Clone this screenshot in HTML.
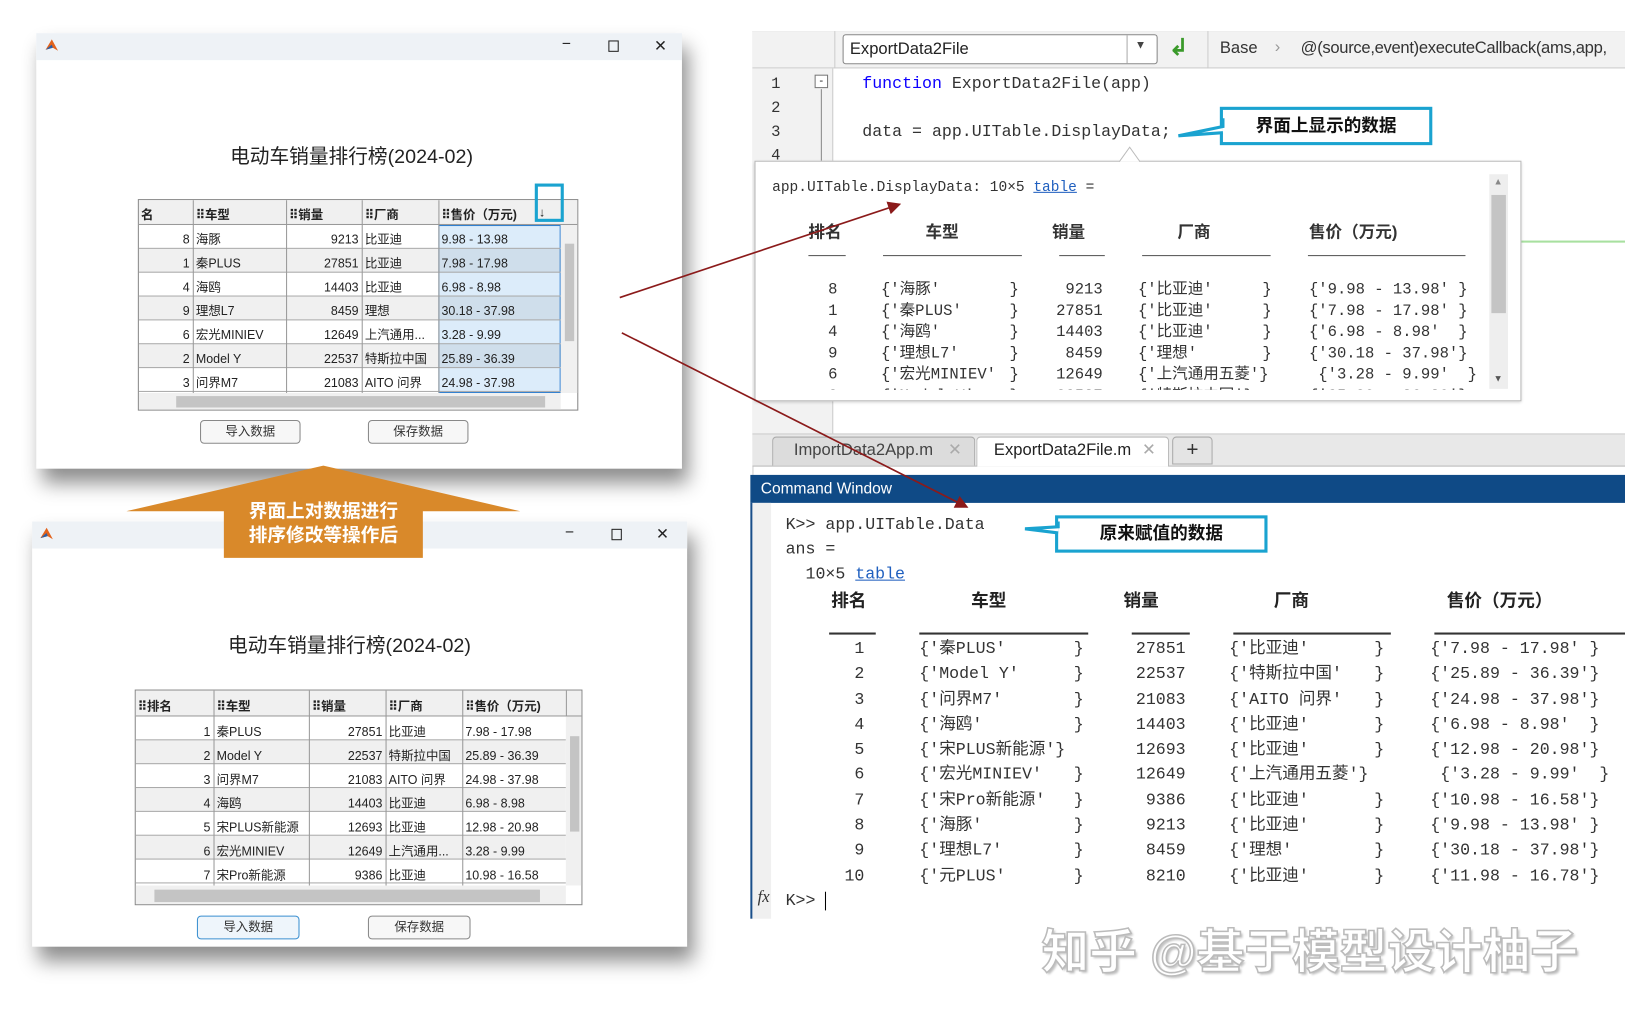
<!DOCTYPE html>
<html><head><meta charset="utf-8">
<style>
*{margin:0;padding:0;box-sizing:border-box}
html,body{width:1625px;height:1012px;overflow:hidden;background:#fff}
#w{position:absolute;left:0;top:0;width:1568px;height:976px;transform:scale(1.0364,1.0369);transform-origin:0 0;font-family:"Liberation Sans","Noto Sans CJK SC",sans-serif;color:#222}
.a{position:absolute}
.win{position:absolute;background:#fff;box-shadow:6px 14px 18px rgba(0,0,0,.45)}
.tb{position:absolute;left:0;top:0;right:0;height:26px;background:#eef2f6}
.ctl{position:absolute;font-size:15px;color:#222}
.t{position:absolute;border:1px solid #888;background:#fff;font-size:12px;overflow:hidden}
.t .c{position:absolute;border-right:1px solid #999;height:100%;top:0}
.t .h{position:absolute;left:0;right:0;top:0;background:#f0f0f0;border-bottom:1px solid #999;font-weight:bold}
.r{position:absolute;left:0;border-bottom:1px solid #aaa;height:23px}
.btn{position:absolute;border:1px solid #888;border-radius:4px;background:#f7f7f7;font-size:12px;text-align:center;line-height:21px;color:#333}
.mono{font-family:"Liberation Mono","Noto Sans CJK SC",monospace}
.call{position:absolute;border:3px solid #1aa3d0;background:#fff;font-weight:bold;font-size:17px;text-align:center;color:#111}
.col{position:absolute;white-space:pre}
</style></head><body><div id="w">

<!-- window 1 -->
<div class="win" style="left:35px;top:32px;width:623px;height:420px">
 <div class="tb"></div>
 <svg class="a" style="left:7px;top:4px" width="16" height="16"><path d="M2 12 L8 2 L14 13 L9 10Z" fill="#e2621b"/><path d="M2 12 L8 7 L9 10Z" fill="#2a5fa8"/></svg>
 <div class="ctl" style="left:507px;top:2px">−</div>
 <div class="a" style="left:552px;top:7px;width:10px;height:11px;border:1.5px solid #222"></div>
 <div class="ctl" style="left:596px;top:3px">✕</div>
 <div class="a" style="left:187px;top:104px;font-size:19px;color:#222;white-space:nowrap">电动车销量排行榜(2024-02)</div>
</div>
<div class="t" style="left:133px;top:192px;width:425px;height:204px">
 <div class="h" style="height:24px"></div>
 <div class="a" style="left:289px;top:24px;width:118px;height:162px;background:#dcecfa;border:1.5px solid #2f7fd0"></div>
 <div class="r" style="top:24px;width:407px;background:transparent"></div>
 <div class="r" style="top:47px;width:407px;background:rgba(0,0,0,.06)"></div>
 <div class="r" style="top:70px;width:407px"></div>
 <div class="r" style="top:93px;width:407px;background:rgba(0,0,0,.06)"></div>
 <div class="r" style="top:116px;width:407px"></div>
 <div class="r" style="top:139px;width:407px;background:rgba(0,0,0,.06)"></div>
 <div class="r" style="top:162px;width:407px"></div>
 <div class="c" style="left:52px;height:186px"></div><div class="c" style="left:142px;height:186px"></div><div class="c" style="left:215px;height:186px"></div><div class="c" style="left:289px;height:186px"></div>
 <div class="col" style="left:2px;top:5px;font-weight:bold">名</div>
 <div class="col" style="left:55px;top:5px;font-weight:bold">⠿车型</div>
 <div class="col" style="left:145px;top:5px;font-weight:bold">⠿销量</div>
 <div class="col" style="left:218px;top:5px;font-weight:bold">⠿厂商</div>
 <div class="col" style="left:292px;top:5px;font-weight:bold">⠿售价（万元)</div>
 <div class="col" style="left:386px;top:5px;font-weight:bold">↓</div>
 <div class="col" style="left:0;width:49px;text-align:right;top:27px;line-height:23px">8
1
4
9
6
2
3</div>
 <div class="col" style="left:55px;top:27px;line-height:23px">海豚
秦PLUS
海鸥
理想L7
宏光MINIEV
Model Y
问界M7</div>
 <div class="col" style="left:142px;width:70px;text-align:right;top:27px;line-height:23px">9213
27851
14403
8459
12649
22537
21083</div>
 <div class="col" style="left:218px;top:27px;line-height:23px">比亚迪
比亚迪
比亚迪
理想
上汽通用...
特斯拉中国
AITO 问界</div>
 <div class="col" style="left:292px;top:27px;line-height:23px">9.98 - 13.98
7.98 - 17.98
6.98 - 8.98
30.18 - 37.98
3.28 - 9.99
25.89 - 36.39
24.98 - 37.98</div>
 <div class="a" style="left:407px;top:24px;width:17px;height:162px;background:#f0f0f0"></div>
 <div class="a" style="left:411px;top:42px;width:9px;height:94px;background:#c4c4c4"></div>
 <div class="a" style="left:0;top:186px;width:407px;height:18px;background:#f0f0f0"></div>
 <div class="a" style="left:36px;top:189px;width:356px;height:11px;background:#c4c4c4"></div>
</div>
<div class="a" style="left:516px;top:177px;width:28px;height:37px;border:3px solid #1aa3d0"></div>
<div class="btn" style="left:193px;top:405px;width:97px;height:23px">导入数据</div>
<div class="btn" style="left:355px;top:405px;width:97px;height:23px">保存数据</div>

<!-- window 2 -->
<div class="win" style="left:31px;top:503px;width:632px;height:410px">
 <div class="tb"></div>
 <svg class="a" style="left:6px;top:4px" width="16" height="16"><path d="M2 12 L8 2 L14 13 L9 10Z" fill="#e2621b"/><path d="M2 12 L8 7 L9 10Z" fill="#2a5fa8"/></svg>
 <div class="ctl" style="left:514px;top:2px">−</div>
 <div class="a" style="left:559px;top:7px;width:10px;height:11px;border:1.5px solid #222"></div>
 <div class="ctl" style="left:602px;top:3px">✕</div>
 <div class="a" style="left:189px;top:105px;font-size:19px;white-space:nowrap">电动车销量排行榜(2024-02)</div>
</div>
<div class="t" style="left:130px;top:665px;width:432px;height:208px">
 <div class="h" style="height:25px"></div>
 <div class="r" style="top:25px;width:415px"></div>
 <div class="r" style="top:48px;width:415px;background:rgba(0,0,0,.06)"></div>
 <div class="r" style="top:71px;width:415px"></div>
 <div class="r" style="top:94px;width:415px;background:rgba(0,0,0,.06)"></div>
 <div class="r" style="top:117px;width:415px"></div>
 <div class="r" style="top:140px;width:415px;background:rgba(0,0,0,.06)"></div>
 <div class="r" style="top:163px;width:415px"></div>
 <div class="c" style="left:75px;height:188px"></div><div class="c" style="left:167px;height:188px"></div><div class="c" style="left:241px;height:188px"></div><div class="c" style="left:315px;height:188px"></div><div class="c" style="left:415px;height:25px"></div>
 <div class="col" style="left:2px;top:6px;font-weight:bold">⠿排名</div>
 <div class="col" style="left:78px;top:6px;font-weight:bold">⠿车型</div>
 <div class="col" style="left:170px;top:6px;font-weight:bold">⠿销量</div>
 <div class="col" style="left:244px;top:6px;font-weight:bold">⠿厂商</div>
 <div class="col" style="left:318px;top:6px;font-weight:bold">⠿售价（万元)</div>
 <div class="col" style="left:0;width:72px;text-align:right;top:29px;line-height:23px">1
2
3
4
5
6
7</div>
 <div class="col" style="left:78px;top:29px;line-height:23px">秦PLUS
Model Y
问界M7
海鸥
宋PLUS新能源
宏光MINIEV
宋Pro新能源</div>
 <div class="col" style="left:167px;width:71px;text-align:right;top:29px;line-height:23px">27851
22537
21083
14403
12693
12649
9386</div>
 <div class="col" style="left:244px;top:29px;line-height:23px">比亚迪
特斯拉中国
AITO 问界
比亚迪
比亚迪
上汽通用...
比亚迪</div>
 <div class="col" style="left:318px;top:29px;line-height:23px">7.98 - 17.98
25.89 - 36.39
24.98 - 37.98
6.98 - 8.98
12.98 - 20.98
3.28 - 9.99
10.98 - 16.58</div>
 <div class="a" style="left:415px;top:25px;width:17px;height:163px;background:#f0f0f0"></div>
 <div class="a" style="left:419px;top:44px;width:9px;height:92px;background:#c4c4c4"></div>
 <div class="a" style="left:0;top:188px;width:415px;height:20px;background:#f0f0f0"></div>
 <div class="a" style="left:18px;top:192px;width:372px;height:12px;background:#c4c4c4"></div>
</div>
<div class="btn" style="left:190px;top:883px;width:99px;height:23px;border-color:#3a8fd0;background:#eef5fb">导入数据</div>
<div class="btn" style="left:355px;top:883px;width:99px;height:23px">保存数据</div>

<!-- orange arrow -->
<svg class="a" style="left:120px;top:447px" width="385" height="92"><path d="M2 46 L192 2 L382 46 L288 46 L288 91 L96 91 L96 46Z" fill="#d9892a"/></svg>
<div class="a" style="left:216px;top:482px;width:192px;text-align:center;color:#fff;font-weight:bold;font-size:18px;line-height:23px">界面上对数据进行<br>排序修改等操作后</div>

<!-- editor -->
<div class="a" style="left:726px;top:30px;width:842px;height:428px;background:#fff;border-left:1px solid #ccc;border-top:1px solid #ccc"></div>
<div class="a" style="left:726px;top:30px;width:842px;height:36px;background:#f2f2f2;border-bottom:1px solid #ccc"></div>
<div class="a" style="left:726px;top:66px;width:78px;height:360px;background:#f2f2f2;border-right:1px solid #ccc"></div>
<div class="a" style="left:805px;top:30px;width:1px;height:36px;background:#ccc"></div>
<div class="a" style="left:813px;top:33px;width:304px;height:29px;border:1px solid #888;background:#fff;border-radius:3px;font-size:16px;line-height:27px;padding-left:6px">ExportData2File</div>
<div class="a" style="left:1087px;top:34px;width:1px;height:27px;background:#aaa"></div>
<div class="a" style="left:1095px;top:38px;font-size:11px;color:#444">▼</div>
<div class="a" style="left:1128px;top:33px;font-size:22px;color:#3a9a2a;font-weight:bold">↲</div>
<div class="a" style="left:1165px;top:30px;width:1px;height:36px;background:#ccc"></div>
<div class="a" style="left:1177px;top:38px;font-size:16px;color:#333">Base</div>
<div class="a" style="left:1230px;top:37px;font-size:16px;color:#999">›</div>
<div class="a" style="left:1255px;top:38px;font-size:16px;color:#333;white-space:nowrap;letter-spacing:-.3px">@(source,event)executeCallback(ams,app,</div>
<div class="col mono" style="left:744px;top:70px;font-size:15px;line-height:23px;color:#333">1
2
3
4</div>
<div class="a" style="left:786px;top:72px;width:13px;height:13px;border:1px solid #777;font-size:11px;line-height:10px;text-align:center;background:#fff">-</div>
<div class="a" style="left:792px;top:86px;width:1px;height:70px;background:#888"></div>
<div class="col mono" style="left:832px;top:70px;font-size:16px;line-height:23px;color:#333"><span style="color:#0e00ff">function</span> ExportData2File(app)

data = app.UITable.DisplayData;</div>
<div class="a" style="left:1460px;top:232px;width:108px;height:2px;background:#a8e0a0"></div>
<!-- datatip -->
<div class="a" style="left:728px;top:155px;width:740px;height:232px;background:#fff;border:1px solid #bbb;box-shadow:0 1px 3px rgba(0,0,0,.2)"></div>
<svg class="a" style="left:1080px;top:141px" width="20" height="16"><path d="M0 15 L10 1 L20 15" fill="#fff" stroke="#bbb"/></svg>
<div class="col mono" style="left:745px;top:173px;font-size:14px;color:#333">app.UITable.DisplayData: 10×5 <span style="color:#1f5fbf;text-decoration:underline">table</span> =</div>
<div class="col" style="left:780px;top:210px;font-size:16px;font-weight:bold;color:#333">排名</div>
<div class="col" style="left:893px;top:210px;font-size:16px;font-weight:bold;color:#333">车型</div>
<div class="col" style="left:1015px;top:210px;font-size:16px;font-weight:bold;color:#333">销量</div>
<div class="col" style="left:1136px;top:210px;font-size:16px;font-weight:bold;color:#333">厂商</div>
<div class="col" style="left:1263px;top:210px;font-size:16px;font-weight:bold;color:#333">售价（万元)</div>
<div class="a" style="left:780px;top:246px;width:36px;height:1px;background:#555"></div>
<div class="a" style="left:852px;top:246px;width:134px;height:1px;background:#555"></div>
<div class="a" style="left:1022px;top:246px;width:44px;height:1px;background:#555"></div>
<div class="a" style="left:1102px;top:246px;width:124px;height:1px;background:#555"></div>
<div class="a" style="left:1262px;top:246px;width:152px;height:1px;background:#555"></div>
<div style="position:absolute;left:728px;top:270px;width:740px;height:106px;overflow:hidden;font-size:15px;line-height:20.5px;color:#333" class="mono">
 <div class="col" style="left:50px;width:30px;text-align:right;top:0">8
1
4
9
6
2</div>
 <div class="col" style="left:122px;top:0">{'海豚'
{'秦PLUS'
{'海鸥'
{'理想L7'
{'宏光MINIEV'
{'Model Y'</div>
 <div class="col" style="left:246px;top:0">}
}
}
}
}
}</div>
 <div class="col" style="left:270px;width:66px;text-align:right;top:0">9213
27851
14403
8459
12649
22537</div>
 <div class="col" style="left:370px;top:0">{'比亚迪'
{'比亚迪'
{'比亚迪'
{'理想'
{'上汽通用五菱'}
{'特斯拉中国'}</div>
 <div class="col" style="left:490px;top:0">}
}
}
}</div>
 <div class="col" style="left:535px;top:0">{'9.98 - 13.98' }
{'7.98 - 17.98' }
{'6.98 - 8.98'  }
{'30.18 - 37.98'}
 {'3.28 - 9.99'  }
{'25.89 - 36.39'}</div>
</div>
<div class="a" style="left:1437px;top:168px;width:18px;height:207px;background:#eee"></div>
<div class="a" style="left:1439px;top:188px;width:14px;height:114px;background:#c4c4c4"></div>
<div class="a" style="left:1441px;top:170px;font-size:9px;color:#888">▲</div>
<div class="a" style="left:1441px;top:360px;font-size:9px;color:#555">▼</div>
<div class="call" style="left:1177px;top:103px;width:205px;height:37px;line-height:31px">界面上显示的数据</div>
<svg class="a" style="left:1133px;top:112px" width="50" height="24"><path d="M47 2 L47 10 L4 19 L47 16" fill="#fff" stroke="#1aa3d0" stroke-width="3"/></svg>

<!-- tabs -->
<div class="a" style="left:726px;top:418px;width:842px;height:32px;background:#e8e8e8;border-top:1px solid #ccc;border-bottom:1px solid #bbb"></div>
<div class="a" style="left:745px;top:421px;width:196px;height:28px;background:#dcdcdc;border:1px solid #aaa;border-bottom:none;border-radius:4px 4px 0 0;font-size:16px;line-height:26px;padding-left:20px;color:#444">ImportData2App.m <span style="color:#aaa;margin-left:10px">✕</span></div>
<div class="a" style="left:942px;top:421px;width:186px;height:29px;background:#fff;border:1px solid #bbb;border-bottom:none;border-radius:4px 4px 0 0;font-size:16px;line-height:26px;padding-left:16px;color:#222">ExportData2File.m <span style="color:#aaa;margin-left:6px">✕</span></div>
<div class="a" style="left:1131px;top:421px;width:39px;height:27px;background:#e4e4e4;border:1px solid #aaa;border-radius:4px 4px 0 0;font-size:20px;text-align:center;line-height:24px;color:#333">+</div>

<!-- command window -->
<div class="a" style="left:724px;top:458px;width:844px;height:27px;background:#0f4a86;color:#fff;font-size:15px;line-height:27px;padding-left:10px">Command Window</div>
<div class="a" style="left:724px;top:485px;width:2px;height:401px;background:#1a4f8a"></div>
<div class="a" style="left:726px;top:485px;width:18px;height:401px;background:#f0f0f0"></div>
<div class="col mono" style="left:758px;top:494px;font-size:16px;line-height:24px;color:#333">K&gt;&gt; app.UITable.Data
ans =
  10×5 <span style="color:#1f5fbf;text-decoration:underline">table</span></div>
<div class="call" style="left:1018px;top:497px;width:205px;height:36px;line-height:30px">原来赋值的数据</div>
<svg class="a" style="left:985px;top:500px" width="40" height="24"><path d="M36 3 L36 8 L4 10 L36 14" fill="#fff" stroke="#1aa3d0" stroke-width="3"/></svg>
<div class="col" style="left:802px;top:565px;font-size:17px;font-weight:bold;color:#222">排名</div>
<div class="col" style="left:937px;top:565px;font-size:17px;font-weight:bold;color:#222">车型</div>
<div class="col" style="left:1084px;top:565px;font-size:17px;font-weight:bold;color:#222">销量</div>
<div class="col" style="left:1229px;top:565px;font-size:17px;font-weight:bold;color:#222">厂商</div>
<div class="col" style="left:1396px;top:565px;font-size:17px;font-weight:bold;color:#222">售价（万元）</div>
<div class="a" style="left:800px;top:610px;width:45px;height:2px;background:#333"></div>
<div class="a" style="left:887px;top:610px;width:163px;height:2px;background:#333"></div>
<div class="a" style="left:1092px;top:610px;width:56px;height:2px;background:#333"></div>
<div class="a" style="left:1190px;top:610px;width:152px;height:2px;background:#333"></div>
<div class="a" style="left:1384px;top:610px;width:184px;height:2px;background:#333"></div>
<div style="position:absolute;left:0;top:614px;width:1568px;height:245px;overflow:hidden;font-size:16px;line-height:24.3px;color:#333" class="mono">
 <div class="col" style="left:800px;width:34px;text-align:right;top:0">1
2
3
4
5
6
7
8
9
10</div>
 <div class="col" style="left:887px;top:0">{'秦PLUS'
{'Model Y'
{'问界M7'
{'海鸥'
{'宋PLUS新能源'}
{'宏光MINIEV'
{'宋Pro新能源'
{'海豚'
{'理想L7'
{'元PLUS'</div>
 <div class="col" style="left:1036px;top:0">}
}
}
}

}
}
}
}
}</div>
 <div class="col" style="left:1070px;width:74px;text-align:right;top:0">27851
22537
21083
14403
12693
12649
9386
9213
8459
8210</div>
 <div class="col" style="left:1186px;top:0">{'比亚迪'
{'特斯拉中国'
{'AITO 问界'
{'比亚迪'
{'比亚迪'
{'上汽通用五菱'}
{'比亚迪'
{'比亚迪'
{'理想'
{'比亚迪'</div>
 <div class="col" style="left:1326px;top:0">}
}
}
}
}

}
}
}
}</div>
 <div class="col" style="left:1380px;top:0">{'7.98 - 17.98' }
{'25.89 - 36.39'}
{'24.98 - 37.98'}
{'6.98 - 8.98'  }
{'12.98 - 20.98'}
 {'3.28 - 9.99'  }
{'10.98 - 16.58'}
{'9.98 - 13.98' }
{'30.18 - 37.98'}
{'11.98 - 16.78'}</div>
</div>
<div class="col" style="left:731px;top:857px;font-size:16px;font-style:italic;font-family:'Liberation Serif',serif;color:#333">fx</div>
<div class="col mono" style="left:758px;top:860px;font-size:16px;color:#333">K&gt;&gt; <span style="border-left:1px solid #000"> </span></div>

<!-- red arrows -->
<svg class="a" style="left:0;top:0" width="1568" height="976">
 <defs><marker id="m" markerWidth="8" markerHeight="8" refX="7" refY="4" orient="auto"><path d="M0 0 L8 4 L0 8Z" fill="#8b1a1a"/></marker></defs>
 <line x1="598" y1="287" x2="868" y2="197" stroke="#8b1a1a" stroke-width="1.6" marker-end="url(#m)"/>
 <line x1="600" y1="321" x2="933" y2="489" stroke="#8b1a1a" stroke-width="1.6" marker-end="url(#m)"/>
</svg>

<!-- watermark -->
<div class="col" style="left:1005px;top:882px;font-size:46px;font-weight:bold;color:#fff;-webkit-text-stroke:1.5px #bbb;text-shadow:2px 2px 2px rgba(0,0,0,.25)">知乎 @基于模型设计柚子</div>
</div></body></html>
